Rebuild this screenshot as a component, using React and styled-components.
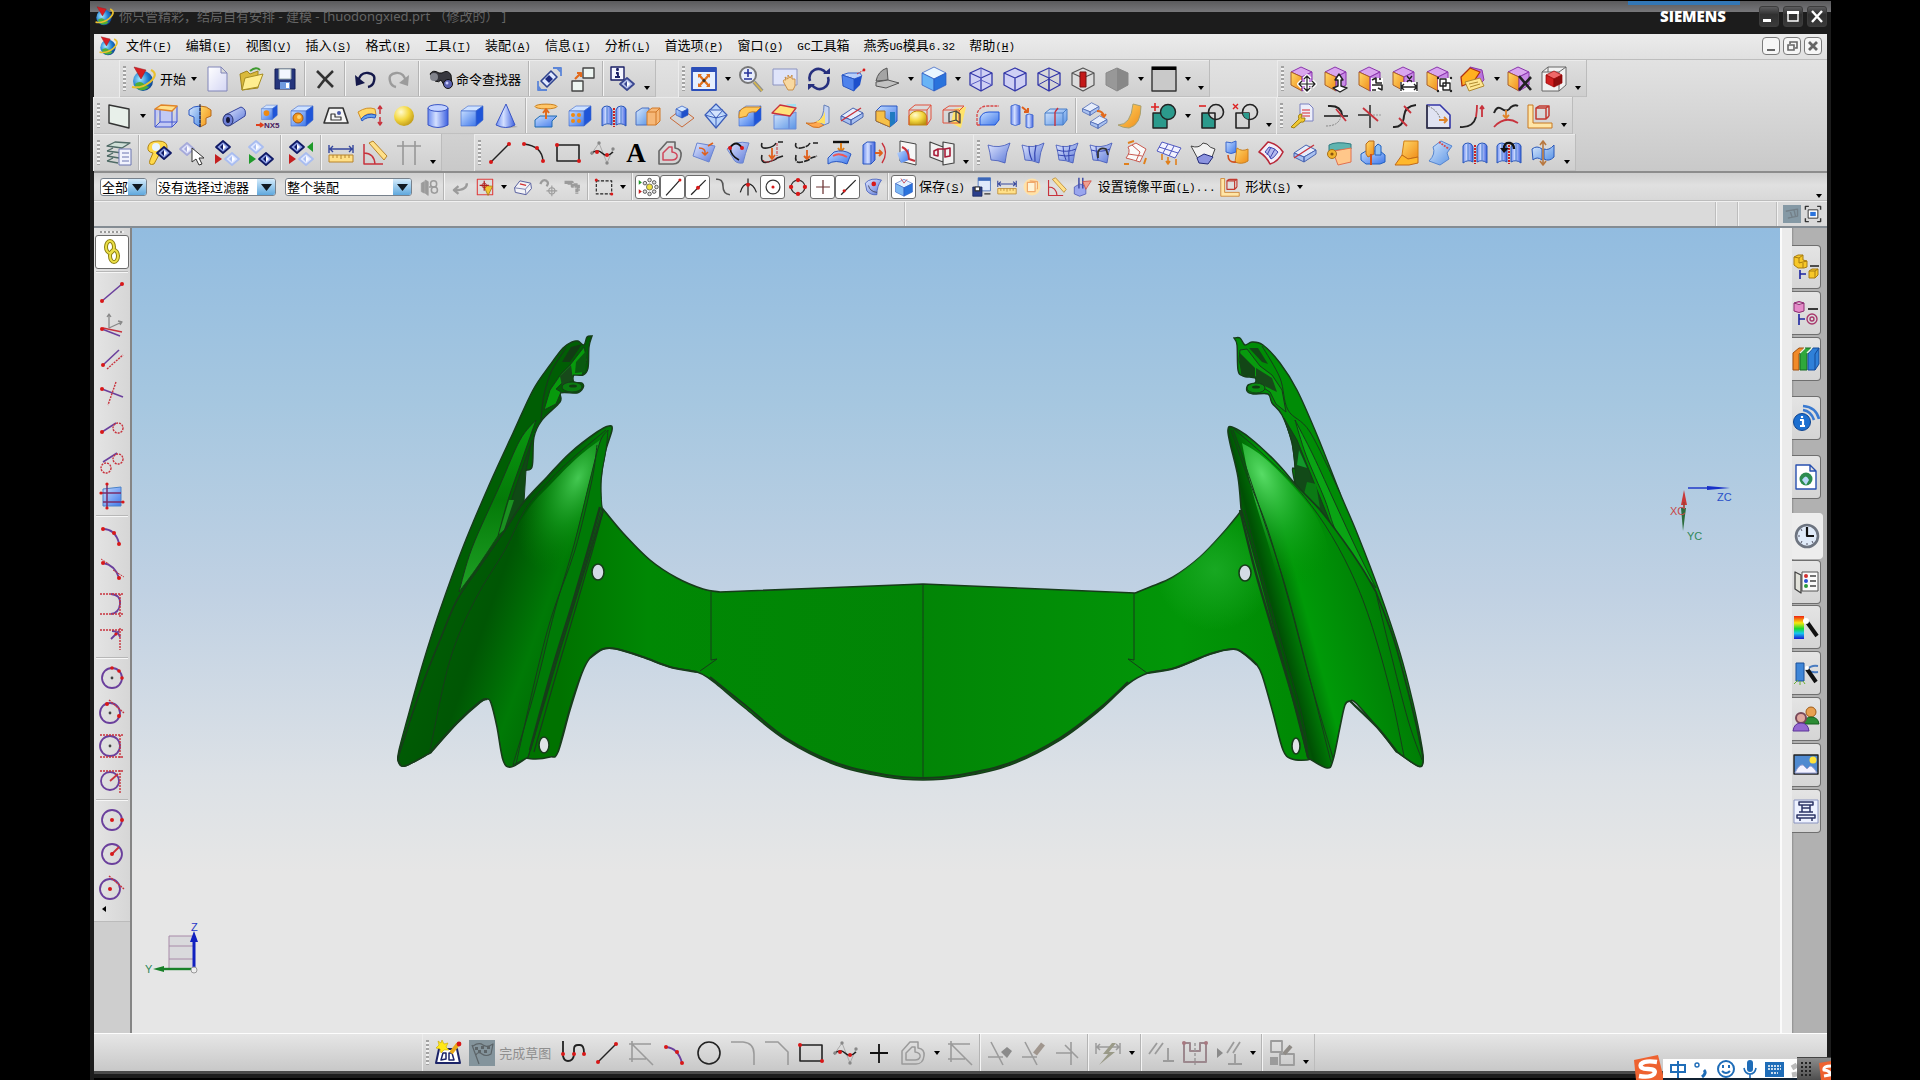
import React from "react";
import styled, { createGlobalStyle, css } from "styled-components";

const GlobalStyle = createGlobalStyle`
  * {
    box-sizing: border-box;
  }
  body {
    margin: 0;
    background: #000;
    color: #000;
    font-family: "Noto Sans CJK SC", sans-serif;
    font-size: 13px;
    line-height: 18px;
  }
  button,
  select {
    margin: 0;
    padding: 0;
    border: 0;
    background: none;
    color: inherit;
    font: inherit;
  }
`;

const Frame = styled.div`
  position: relative;
  display: flex;
  flex-direction: column;
  height: 100vh;
  margin: 0 89px 0 90px;
  padding: 0 4px 0 4px;
  background: #1c1c1c;
  overflow: hidden;
`;

const TitleBar = styled.header`
  display: flex;
  align-items: center;
  flex: none;
  height: 34px;
  margin: 0 -4px;
  padding: 0 4px 3px 4px;
  border-top: 1px solid #000;
  background: linear-gradient(#5a5a5c, #77777a 11px, #1c1c1c 11px);
`;

const TitleText = styled.h1`
  flex: 1;
  margin: 0 0 0 5px;
  color: #656565;
  font: 400 13px/18px "Noto Sans", "Noto Sans CJK SC", sans-serif;
  white-space: pre;
`;

const Brand = styled.div`
  align-self: stretch;
  width: 112px;
  margin-right: 15px;
  padding: 2px 0 0 32px;
  border-top: 4px solid #3377b5;
  color: #fff;
  font: 800 15px/18px "Open Sans", sans-serif;
`;

const WindowButton = styled.button`
  width: 20px;
  height: 21px;
  margin-left: 4px;
  border: 1px solid #3c3c3c;
  border-radius: 3px;
  background: linear-gradient(#5d5d5f, #303030 40%, #3a3a3a);
  svg {
    display: block;
  }
`;

const MenuBar = styled.nav`
  display: flex;
  align-items: center;
  flex: none;
  gap: 0;
  height: 26px;
  padding: 0 5px 2px 4px;
  border-bottom: 1px solid #bdbdbd;
  background: linear-gradient(#ececec, #e0e0e0);
`;

const MenuItem = styled.button`
  margin-right: 14px;
  white-space: nowrap;
`;

const MdiButton = styled.button`
  width: 18px;
  height: 18px;
  margin-left: 3px;
  border: 1px solid #7b7b7b;
  border-radius: 4px;
  background: #f6f6f6;
  svg {
    display: block;
  }
`;

const Spacer = styled.div`
  flex: ${(p) => (p.$width ? "none" : 1)};
  width: ${(p) => p.$width || 0}px;
`;

const Latin = styled.span`
  font-family: "Liberation Mono", monospace;
  font-size: 11px;
`;

const ToolArea = styled.div`
  flex: none;
  border-bottom: 2px solid #8d8d8d;
  background: linear-gradient(#e2e2e2, #c9c9c9);
`;

const ToolRow = styled.div`
  display: flex;
  height: 37px;
  padding-left: ${(p) => p.$indent || 0}px;
`;

const ToolGroup = styled.div`
  display: flex;
  align-items: center;
  margin-left: ${(p) => p.$gap || 0}px;
  border-top: 1px solid #ebebeb;
  border-bottom: 1px solid #c0c0c0;
  box-shadow: 1px 0 #bcbcbc, -1px 0 #ececec;
  background: linear-gradient(#dfdfdf, #cfcfcf);
`;

const Grip = styled.i`
  align-self: center;
  flex: none;
  width: 3px;
  height: 25px;
  margin: 0 2px 0 3px;
  background: repeating-linear-gradient(#a2a2a2 0 2px, #f1f1f1 2px 4px);
`;

const Separator = styled.i`
  align-self: stretch;
  flex: none;
  width: 2px;
  margin: 0 2px;
  border-left: 1px solid #b4b4b4;
  border-right: 1px solid #f4f4f4;
`;

const IconButton = styled.button`
  display: flex;
  align-items: center;
  justify-content: center;
  flex: none;
  width: ${(p) => (p.$small ? 25 : 34)}px;
  height: ${(p) => (p.$small ? 24 : 34)}px;
  ${(p) =>
    p.$pressed &&
    css`
      border: 1px solid #6c6c6c;
      border-radius: 3px;
      background: #fff;
    `}
`;

const TextButton = styled.button`
  display: flex;
  align-items: center;
  flex: none;
  gap: ${(p) => p.$gap || 2}px;
  padding: 0 ${(p) => (p.$end === undefined ? 5 : p.$end)}px 0 ${(p) => (p.$start === undefined ? 4 : p.$start)}px;
  color: ${(p) => (p.$off ? "#8f8f8f" : "#000")};
  white-space: nowrap;
`;

const DropArrow = styled.i`
  display: flex;
  justify-content: center;
  flex: none;
  width: 13px;
  &::after {
    content: "";
    border: 3px solid transparent;
    border-top: 4px solid #000;
    border-bottom: 0;
  }
`;

const Overflow = styled(DropArrow)`
  width: 15px;
  padding: 18px 2px 0 0;
`;

const SelectionBar = styled.div`
  display: flex;
  align-items: center;
  flex: none;
  height: 28px;
  padding: 0 0 0 6px;
  border-bottom: 1px solid #bcbcbc;
  background: linear-gradient(#cfcfcf, #e0e0e0 12px, #d8d8d8);
`;

const SelectBox = styled.label`
  display: flex;
  flex: none;
  width: ${(p) => p.$width}px;
  height: 18px;
  margin-right: 9px;
  border: 1px solid #77818c;
  border-radius: 3px;
  background: #fff;
  overflow: hidden;
  &:last-of-type {
    margin-right: 4px;
  }
  select {
    flex: 1;
    min-width: 0;
    padding-left: 1px;
    appearance: none;
    outline: 0;
    line-height: 16px;
  }
  svg {
    flex: none;
    background: linear-gradient(#d4ebfb, #5fa8dd);
  }
`;

const StatusBar = styled.div`
  display: flex;
  align-items: center;
  flex: none;
  height: 27px;
  border-top: 1px solid #f0f0f0;
  border-bottom: 2px solid #848c93;
  background: #dadada;
`;

const StatusCell = styled.div`
  align-self: stretch;
  flex: ${(p) => p.$flex || "none"};
  width: ${(p) => p.$width || 0}px;
  border-right: 1px solid #f2f2f2;
  box-shadow: inset -1px 0 #bdbdbd;
`;

const Body = styled.main`
  display: flex;
  flex: 1;
  min-height: 0;
`;

const SideBar = styled.aside`
  flex: none;
  width: 38px;
  border-right: 2px solid #858585;
  background: #cecece;
`;

const SideTools = styled.div`
  display: flex;
  flex-direction: column;
  align-items: center;
  height: 694px;
  border-bottom: 1px solid #bbb;
  background: linear-gradient(90deg, #e4e4e4, #d6d6d6);
  hr {
    width: 32px;
    height: 2px;
    margin: 2px 0;
    border: 0;
    border-top: 1px solid #b7b7b7;
    border-bottom: 1px solid #f6f6f6;
  }
`;

const SideGrip = styled.i`
  flex: none;
  width: 24px;
  height: 2px;
  margin: 3px 0 2px;
  background: repeating-linear-gradient(90deg, #999 0 2px, #eee 2px 4px);
`;

const Canvas = styled.section`
  flex: 1;
  min-width: 0;
  background: linear-gradient(#92bce0, #a6c7e0 22%, #c0d1e3 45%, #dce1e6 68%, #e6e6e6 80%);
  svg {
    display: block;
    width: 100%;
    height: 100%;
  }
`;

const Strip = styled.div`
  flex: none;
  width: 12px;
  border-left: 2px solid #fbfbfb;
  background: #ebebeb;
`;

const TabRail = styled.aside`
  flex: none;
  width: 35px;
  padding-top: 17px;
  background: linear-gradient(90deg, #8f8f8f, #b1b1b1 2px);
`;

const RailTab = styled.button`
  display: flex;
  align-items: center;
  justify-content: center;
  width: 29px;
  height: 44px;
  margin: 0 0 ${(p) => p.$after || 2}px 0;
  border: 1px solid #6f6f6f;
  border-left: 0;
  border-radius: 0 4px 4px 0;
  background: linear-gradient(#e4e4e4, #d5d5d5);
  ${(p) =>
    p.$active &&
    css`
      width: 31px;
      height: 46px;
      border-color: #eee;
      background: #ededed;
    `}
`;

const BottomBar = styled.footer`
  display: flex;
  flex: none;
  height: 38px;
  padding-left: 19%;
  border-top: 1px solid #fdfdfd;
  background: linear-gradient(#e6e6e6, #c8c8c8);
  ${ToolGroup} {
    border: 0;
    background: none;
  }
`;

const FrameFoot = styled.div`
  flex: none;
  height: 9px;
  border-top: 3px solid #4a4a4a;
  border-bottom: 2px solid #000;
  background: #1c1c1c;
`;

const InputMethod = styled.div`
  position: absolute;
  right: 0;
  bottom: 0;
  display: flex;
  align-items: flex-end;
  height: 25px;
`;

const ImeKeys = styled.div`
  display: flex;
  align-items: center;
  height: 21px;
  padding-left: 5px;
  border-bottom: 2px solid #123;
  background: #fff;
`;

const ImeTail = styled.div`
  width: 34px;
  height: 23px;
  border-top: 1px solid #444;
  background: linear-gradient(#8c8c8c, #4e4e4e);
`;

// ---- drawing helpers, every icon lives on a 26 x 26 grid ----

const P = ({ d, f = "none", s = "#222", w = 1, dash }) => (
  <path d={d} fill={f} stroke={s} strokeWidth={w} strokeDasharray={dash} strokeLinejoin="round" />
);

const Dots = ({ at, c = "#d81818", r = 2 }) =>
  at.map(([x, y]) => <circle key={`${x}-${y}`} cx={x} cy={y} r={r} fill={c} />);

const Box = ({ x = 3, y = 3, w = 20, top = "#d5e8ff", left = "url(#blue)", right = "#1d50cc", s = "#2a56c0" }) => {
  const h = w / 4;
  return (
    <g transform={`translate(${x} ${y})`}>
      <P d={`M0 ${h} L${w / 2} 0 L${w} ${h} L${w / 2} ${h * 2}Z`} f={top} s={s} w={0.7} />
      <P d={`M0 ${h} L${w / 2} ${h * 2} V${w} L0 ${w - h}Z`} f={left} s={s} w={0.7} />
      <P d={`M${w} ${h} L${w / 2} ${h * 2} V${w} L${w} ${w - h}Z`} f={right} s={s} w={0.7} />
    </g>
  );
};

const Block = ({ front = "url(#blue)", top = "#cfe2ff", side = "#1f55d8", s = "#3a66cc" }) => (
  <>
    <P d="M2 8 L9 3 H24 L17 8Z" f={top} s={s} w={0.6} />
    <P d="M17 8 L24 3 V17 L17 23Z" f={side} s={s} w={0.6} />
    <P d="M2 8 H17 V23 H2Z" f={front} s={s} w={0.6} />
  </>
);

const Wire = ({ fill = "#cfd0f4", extra }) => (
  <>
    <P d="M2 7 L13 2 L24 7 V19 L13 25 L2 19Z" f={fill} s="#3236a8" w={1.3} />
    <P d="M2 7 L13 12 L24 7 M13 12 V25" s="#3236a8" w={1.3} />
    {extra && <P d="M13 2 V14 M2 19 L13 14 L24 19" s="#5a5ec4" w={1} />}
  </>
);

const Asm = ({ children }) => (
  <>
    <P d="M1 6 L11 1 L22 6 L12 11Z" f="#d9a6ee" s="#8a34ad" />
    <P d="M1 6 L12 11 V25 L1 19Z" f="url(#orange)" s="#a8602a" />
    <P d="M22 6 L12 11 V25 L22 19Z" f="#c88ae6" s="#8a34ad" />
    {children}
  </>
);

const Diamond = ({ x, y, c = "#101a66", f = "#8fa2e8" }) => (
  <g transform={`translate(${x} ${y})`}>
    <P d="M0 -6 L7 0 L0 6 L-7 0Z" f={f} s={c} w={1.8} />
    <P d="M0 -3 V3 L3 0Z" f="#fff" s="none" />
    <P d="M0 -3 V3 L-3 0Z" f={c} s="none" />
  </g>
);

const Layers = () => (
  <>
    <P d="M2 13 L14 5 L24 10 L12 17Z" f="#e6edfb" s="#4763b0" />
    <P d="M2 13 V17 L12 22 V17Z M12 17 L24 10 V14 L12 22Z" f="#a9c1f0" s="#4763b0" />
  </>
);

const Book = ({ mid = "#c22" }) => (
  <>
    <P d="M1 23 V6 Q2 3 6 3 Q10 3 11 7 V22 Q6 19 1 23Z" f="url(#tube)" s="#2857b8" />
    <P d="M15 22 V7 Q16 3 20 3 Q24 3 25 6 V23 Q20 19 15 22Z" f="url(#tube)" s="#2857b8" />
    <P d="M6 4 V20 M20 4 V20" s="#3f74d0" />
    <P d="M13 5 V24" s={mid} w={2} dash="2 1" />
  </>
);

const Sheet = () => <P d="M2 5 Q13 9 24 3 Q20 12 19 23 Q12 20 5 20 Q4 12 2 5Z" f="url(#steel)" s="#4055b8" w={0.8} />;

const Circ = ({ cx = 13, cy = 13, r = 9, s = "#6a3f9c", w = 1.4, dash }) => (
  <circle cx={cx} cy={cy} r={r} fill="none" stroke={s} strokeWidth={w} strokeDasharray={dash} />
);

const Nx = () => (
  <>
    <circle cx="13" cy="15" r="10" fill="url(#globe)" />
    <P d="M5 18 Q10 14 14 18 T20 20 Q16 25 10 24 Q6 22 5 18Z" f="#4fae35" s="none" />
    <P d="M21 4 Q29 8 20 16 Q11 23 2 21" s="#e8c030" w={2.2} />
    <P d="M4 1 L16 4 L11 13Z" f="#d81e24" s="#98141a" w={0.5} />
  </>
);

const red = "#c8323c";
const ink = "#222";
const dim = "#9b9b9b";
const vio = "#6a3f9c";

const icons = {
  nx: <Nx />,
  newFile: <P d="M4 1 H17 L23 7 V25 H4Z M17 1 V7 H23" f="url(#paper)" s="#8085b8" />,
  open: (
    <>
      <P d="M2 8 L9 5 L12 8 L20 5 V22 L4 24Z" f="#d9b93c" s="#9f8420" />
      <P d="M4 24 L7 12 L25 8 L20 21Z" f="#ffee90" s="#a68d22" />
      <P d="M12 5 Q18 0 22 4" s="#3f9a30" w={2} />
    </>
  ),
  save: (
    <>
      <P d="M3 3 H23 V23 H3Z" f="#25357c" s="#141f55" />
      <P d="M7 3 H19 V13 H7Z" f="#f3f6ff" s="#9aa" />
      <P d="M8 16 H18 V23 H8Z" f="#6f9be0" s="none" />
      <P d="M14 17 H17 V22 H14Z" f="#fff" s="none" />
    </>
  ),
  del: <P d="M5 5 L21 21 M21 5 Q13 12 6 22" s="#333" w={2.6} />,
  undo: (
    <>
      <P d="M6 16 Q8 6 16 7 Q24 8 22 15 Q21 20 16 21" s="#14184a" w={2.4} />
      <P d="M3 9 L4 20 L13 17Z" f="#14184a" s="none" />
    </>
  ),
  redo: (
    <>
      <P d="M20 16 Q18 6 10 7 Q2 8 4 15 Q5 20 10 21" s={dim} w={2.4} />
      <P d="M23 9 L22 20 L13 17Z" f={dim} s="none" />
    </>
  ),
  binoc: (
    <>
      <P d="M2 8 Q5 3 11 7 L14 7 Q20 3 23 9 L24 19 Q20 23 16 19 L13 14 Q11 17 7 15Z" f="#38383f" s="#111" />
      <circle cx="6" cy="11" r="4" fill="#82848c" />
      <circle cx="20" cy="18" r="4.5" fill="#5b62b0" stroke="#111" />
      <circle cx="19" cy="17" r="1.5" fill="#c8cbff" />
    </>
  ),
  snapFit: (
    <>
      <P d="M5 15 L15 5 L21 11 L11 21Z" f="#dfe8ff" s="#2f438e" w={1.6} />
      <P d="M13 9 L17 13 L13 17 L9 13Z" f="#1c2a80" s="none" />
      <P d="M2 15 V24 H11 M5 24 L2 20 M17 2 H25 V10 M21 2 L25 6" s="#5c86d8" w={1.8} />
    </>
  ),
  arrange: (
    <>
      <P d="M13 2 H24 V12 H13Z M2 15 H13 V25 H2Z" f="#eef6f2" s="#444" w={1.4} />
      <P d="M5 13 L11 7 M7 7 H11 V11" s="#e26a1c" w={2.2} />
    </>
  ),
  info: (
    <>
      <P d="M1 1 H14 V14 H1Z" f="#f4f5ff" s="#1a1f66" w={1.4} />
      <P d="M7 3 h1 v1 h-1z M6 7 H8 V11 M5 11 H10" f="#1a1f66" s="#1a1f66" w={1.8} />
      <Diamond x={17} y={18} f="#b9c4ec" c="#3a4790" />
    </>
  ),
  fit: (
    <>
      <P d="M1 2 H25 V24 H1Z" f="#e6f0ff" s="#2b4eb8" w={1.8} />
      <P d="M1 2 H25 V6 H1Z" f="#2b4eb8" s="none" />
      <P d="M8 9 L18 20 M18 9 L8 20" s="#e0701c" w={2.4} />
      <P d="M7 8 h4 l-4 4z M19 8 v4 l-4 -4z M7 21 v-4 l4 4z M19 21 h-4 l4 -4z" f="#e0701c" s="none" />
      <circle cx="13" cy="14.5" r="1.6" fill="#3a3020" />
    </>
  ),
  zoom: (
    <>
      <P d="M16 16 L24 25" s="#8f8f8f" w={4} />
      <P d="M16 16 L24 25" s="#d8b84a" w={1.6} />
      <circle cx="10" cy="9" r="8" fill="#e7ecfa" stroke="#777" strokeWidth="2" />
      <P d="M10 3 V11 M6 7 H14 M6 13 H14" s="#26329a" w={1.6} />
    </>
  ),
  pan: (
    <>
      <P d="M1 3 H25 V19 H1Z" f="#dfe4fa" s="#8b93c0" />
      <P d="M12 17 Q10 13 14 14 L13 11 L16 13 V9 L18 12 L20 9 V13 L23 13 V20 L21 24 H16Z" f="#f8d8a0" s="#c98f48" />
    </>
  ),
  rotate: (
    <>
      <P d="M4 15 A9 9 0 0 1 20 7 M22 11 A9 9 0 0 1 6 19" s="#27307e" w={2.6} />
      <P d="M17 8 H24 V2Z M9 18 H2 V24Z" f="#27307e" s="none" />
    </>
  ),
  persp: (
    <>
      <P d="M2 9 L8 7 H20 L22 10 L14 13Z" f="#b9d0fb" s="#3a66cc" />
      <P d="M2 9 L14 13 V25 L3 20Z" f="#4f83ec" s="#2a56c0" />
      <P d="M22 10 L14 13 V25 L20 19Z" f="#1d50cc" s="none" />
      <P d="M17 8 L24 4" s={red} dash="2 1" />
      <Dots at={[[24, 4]]} r={1.4} />
    </>
  ),
  laptop: (
    <>
      <P d="M2 15 Q4 5 13 2 L14 14Z" f="#a4a4a4" s="#555" />
      <P d="M2 16 L14 14 L25 17 L12 22 L2 20Z" f="#c2c2c2" s="#555" />
    </>
  ),
  shaded: <Box x={1} y={1} w={24} top="#e9f6ff" left="#69b4f6" right="#2a73dc" />,
  wire1: <Wire extra />,
  wire2: <Wire />,
  wire3: (
    <>
      <Wire fill="none" />
      <P d="M13 2 V25 M2 19 L13 13 L24 19" s="#3236a8" />
    </>
  ),
  section: (
    <>
      <P d="M2 7 L13 2 L24 7 V19 L13 25 L2 19Z M2 7 L13 12 L24 7" f="#dcdcdc" s="#555" w={1.2} />
      <P d="M10 6 H16 V21 H10Z" f="#c41818" s="#701010" />
    </>
  ),
  grayHex: (
    <>
      <P d="M2 7 L13 2 L24 7 V19 L13 25 L2 19Z" f="#989898" s="#8a8a8a" />
      <P d="M13 2 V25 L24 19 V7Z" f="#888" s="none" />
    </>
  ),
  window: (
    <>
      <P d="M1 1 H25 V25 H1Z" f="#c9c9c9" s="#333" w={1.4} />
      <P d="M1 1 H25 V4 H1Z" f="#000" s="none" />
    </>
  ),
  asmMove: (
    <Asm>
      <P d="M17 10 V25 M9 18 H25 M14 13 L17 10 L20 13 M14 22 L17 25 L20 22 M12 15 L9 18 L12 21 M22 15 L25 18 L22 21" s="#fff" w={4} />
      <P d="M17 10 V25 M9 18 H25 M14 13 L17 10 L20 13 M14 22 L17 25 L20 22 M12 15 L9 18 L12 21 M22 15 L25 18 L22 21" w={1.2} />
    </Asm>
  ),
  asmConstr: (
    <Asm>
      <P d="M15 8 L19 14 H17 V20 L23 22 L16 26 L9 22 L14 20 V14 H11Z" f="#fff" w={1.4} />
    </Asm>
  ),
  asmSwap: (
    <Asm>
      <P d="M13 12 H25 V25 H13Z" f="#fff" s="none" />
      <P d="M14 14 L18 12 V17 H24 M14 19 H24 V24 L20 22 M14 24 H18 M22 12 V14" w={1.6} />
    </Asm>
  ),
  asmDim: (
    <Asm>
      <P d="M8 16 H26 V26 H8Z" f="#fff" s="none" />
      <P d="M9 16 V25 M25 16 V25 M9 21 H25 M12 18 L9 21 L12 24 M22 18 L25 21 L22 24 M15 10 L20 16 M20 10 L15 16" w={1.4} />
    </Asm>
  ),
  asmGroup: (
    <Asm>
      <P d="M12 12 H25 V25 H12Z" f="#fff" s="none" />
      <P d="M14 13 H20 V20 H14Z M17 17 H24 V24 H17Z" w={1.4} />
      <Dots at={[[12, 12], [25, 12], [12, 25], [25, 25]]} c="#222" r={1.2} />
    </Asm>
  ),
  asmTag: (
    <>
      <P d="M10 1 L22 4 L24 14 L18 20Z" f="#b874dc" s="#8a34ad" />
      <P d="M1 11 L10 2 L20 6 L14 15 L2 20Z" f="#ffb020" s="#b03010" w={1.3} />
      <P d="M5 16 L20 12 L24 20 L9 25Z" f="#ffe692" s="#b08a30" />
      <P d="M9 18 L18 16 M10 21 L20 18" s="#b08a30" />
    </>
  ),
  asmDel: (
    <Asm>
      <P d="M12 10 L24 24 M24 11 L12 24" w={2.6} />
    </Asm>
  ),
  redCube: (
    <>
      <P d="M1 6 H18 V25 H1Z M1 6 L7 1 H25 V19 L18 25 M18 6 L25 1 M7 1 V6" s="#666" f="#f1f1f1" />
      <Box x={5} y={5} w={16} top="#f06868" left="#d02020" right="#8e0e0e" s="#900" />
    </>
  ),

  plane: <P d="M3 2 L23 6 V25 L3 20Z" f="#e8f0ea" s="#333" w={1.4} />,
  extrude: (
    <>
      <P d="M2 6 V24 H19 V7 M24 3 V19 L19 24 M7 4 V19 L2 24 M7 19 H24" s="#4055d0" w={1} f="#c2c9f3" />
      <P d="M2 6 L8 2 L24 3 L19 8Z" f="#ffdf8a" s="#e08428" w={1.4} />
    </>
  ),
  revolve: (
    <>
      <P d="M13 3 Q20 3 24 7 V13 L19 15 V21 L13 24 V12Z" f="url(#orange)" s="#b56a1c" />
      <P d="M13 3 Q6 3 2 7 V12 L7 14 V20 L13 24Z" f="url(#sky)" s="#2a56c0" />
      <P d="M13 1 V25" s="#223" dash="3 1" />
    </>
  ),
  tube: (
    <>
      <P d="M4 12 L20 4 Q26 6 24 13 L10 22 Q2 20 4 12Z" f="url(#steel)" s="#33439c" />
      <ellipse cx="7" cy="17" rx="5" ry="6" fill="#6f80d6" stroke="#222c66" />
      <ellipse cx="7" cy="17" rx="2" ry="3" fill="#15183a" />
    </>
  ),
  nx5: (
    <>
      <g transform="translate(5 0) scale(0.72)">
        <Block />
        <circle cx="9" cy="14" r="4" fill="#f08a10" />
      </g>
      <P d="M1 22 H7 M5 20 L8 22 L5 24" s="#e0401c" w={1.8} />
      <text x="9" y="25" fontSize="8" fontWeight="700" fontFamily="Liberation Sans" fill="#4a2060">NX5</text>
    </>
  ),
  hole: (
    <>
      <Block />
      <circle cx="9" cy="15" r="5" fill="#f39a20" stroke="#a85a10" />
      <circle cx="10" cy="14" r="2" fill="#ffd470" />
    </>
  ),
  emboss: (
    <>
      <P d="M6 5 H20 L25 20 H1Z" f="#f6f6f6" s="#333" w={1.6} />
      <P d="M8 16 V11 H12 V14 H18 V17 H8Z" s="#333" w={1.2} />
      <circle cx="16" cy="10" r="2" fill="#4a5aa8" />
    </>
  ),
  thicken: (
    <>
      <P d="M1 9 Q10 3 18 6 L19 12 Q10 8 4 16Z" f="#ffd868" s="#d09028" />
      <P d="M4 16 Q10 9 19 12 L18 15 Q10 13 5 18Z" f="#64a0ec" s="#2a56c0" />
      <P d="M23 3 V11 M21 6 L23 3 L25 6 M23 14 V22 M21 19 L23 22 L25 19" s={red} w={1.5} />
    </>
  ),
  sphere: <circle cx="13" cy="13" r="10" fill="url(#ball)" />,
  cylinder: (
    <>
      <P d="M3 5 V22 Q13 27 23 22 V5" f="url(#tube)" s="#3a55c4" />
      <ellipse cx="13" cy="5" rx="10" ry="3.4" fill="#c3d3ff" stroke="#3a55c4" />
    </>
  ),
  block: <Block />,
  cone: (
    <>
      <P d="M16 21 L25 24 L14 25Z" f="#aaa" s="none" />
      <P d="M13 1 L3 22 Q13 27 22 22Z" f="url(#tube)" s="#3a55c4" />
    </>
  ),
  boss: (
    <>
      <P d="M2 17 L7 13 H24 L19 18 V24 H2Z" f="url(#blue)" s="#1f6ab0" />
      <ellipse cx="13" cy="3.5" rx="11" ry="2.4" fill="#ffc668" stroke="#c98020" />
      <P d="M13 16 V7 M10 10 L13 6 L16 10" s="#e26a1c" w={2} />
    </>
  ),
  pattern: (
    <>
      <Block />
      <Dots at={[[6, 12], [12, 12], [6, 18], [12, 18]]} c="#f08a10" r={2} />
    </>
  ),
  book: <Book />,
  mirror: (
    <>
      <P d="M1 9 L7 5 H14 V19 L12 22 H1Z" f="url(#sky)" s="#4a6fc0" />
      <P d="M12 9 L17 5 H25 V18 L21 22 H12Z" f="#f6b878" s="#d07828" />
      <P d="M12 9 H21 V22 M21 9 L25 5" s="#d07828" />
    </>
  ),
  offsetBox: (
    <>
      <P d="M13 6 L25 15 L13 24 L1 15Z" s="#c86a3a" f="none" />
      <Box x={7} y={3} w={12} />
    </>
  ),
  octa: (
    <>
      <P d="M13 1 L24 12 L13 25 L2 12Z" f="#b9d4fa" s="#3a5cb8" w={1.2} />
      <P d="M2 12 L13 15 L24 12 M13 15 V25 M6 7 L13 15 L20 7 Z" f="#d4e4fd" s="#3a5cb8" />
    </>
  ),
  blend: (
    <>
      <Block />
      <P d="M2 12 Q2 6 9 4 H24 L19 9 Q10 8 10 13 L2 15Z" f="#ffc858" s="#c98020" />
    </>
  ),
  chamfer: (
    <>
      <P d="M3 12 H18 V26 H3Z M18 12 L25 9 V26 H18Z" f="url(#sky)" s="#6a8cd8" />
      <P d="M15 1 H25 V8Z" f="#9fe2f2" s="none" />
      <P d="M1 10 L9 2 L25 5 L19 13Z" f="#ffe27a" s={red} w={1.3} />
    </>
  ),
  bend: (
    <>
      <P d="M1 20 Q10 21 13 18 L19 22 Q14 26 8 24Z" f="#ffa850" s="#d07020" />
      <P d="M13 18 Q19 14 19 2 L24 4 V20 L19 22Z" f="#c5d4f2" s="#6680b8" />
      <P d="M11 19 Q18 16 20 8 V21Z" f="#ffe060" s="none" />
    </>
  ),
  trim: (
    <>
      <Layers />
      <P d="M2 18 L22 5" s={red} w={1.4} />
    </>
  ),
  rib: (
    <>
      <P d="M3 8 L8 3 H24 V18 L17 24 L3 18Z" f="url(#blue)" s="#2a56c0" />
      <P d="M3 8 H12 V15 L17 18 V24 L3 18Z" f="#f6c048" s="#a8702a" />
      <P d="M17 9 H22 V20 L17 24Z" f="#1f7ac0" s="none" />
    </>
  ),
  dome: (
    <>
      <P d="M2 22 V13 Q6 7 13 8 Q20 9 20 16 V22Z" f="url(#ball)" s="#c08810" />
      <P d="M2 7 L8 2 H24 V16 L20 22 M2 7 H20 V22 M20 7 L24 2 M2 7 V22" s="#e0503c" />
    </>
  ),
  patch: (
    <>
      <P d="M13 6 L25 4 L20 25 L10 20Z" f="#ffe36a" s="none" />
      <P d="M2 7 L8 3 H23 L18 8 V20 H2Z M2 7 H18" s="#e0503c" />
      <P d="M8 10 L15 8 V17 L8 19Z M15 8 L19 11 V20 L15 17" s="#444" w={1.3} />
    </>
  ),
  roundBox: (
    <>
      <P d="M5 22 V15 Q7 9 14 9 H24 V17 L20 22Z" f="url(#blue)" s="#1f55d8" />
      <P d="M2 22 V11 Q4 3 13 3 H24 M2 22 H5" s="#d84848" w={1.3} dash="3 1" />
    </>
  ),
  moveFace: (
    <>
      <P d="M2 3 Q6 0 11 3 V21 Q6 24 2 21Z" f="url(#tube)" s="#4a6fd0" />
      <P d="M17 12 Q20 10 24 12 V24 Q20 26 17 24Z" f="url(#tube)" s="#4a6fd0" />
      <P d="M13 4 L19 9 M19 5 V9 H15" s="#e0601c" w={2} />
    </>
  ),
  split: (
    <>
      <P d="M2 10 L7 6 H24 V17 L20 22 H2Z" f="url(#sky)" s="#4a7fc8" />
      <P d="M2 10 H20 V22 M20 10 L24 6" s="#4a7fc8" />
      <P d="M12 9 V23 M12 9 L15 5" s={red} w={1.4} />
    </>
  ),
  stack: (
    <>
      <g transform="translate(-2 -4) scale(0.75)"><Layers /></g>
      <g transform="translate(6 9) scale(0.75)"><Layers /></g>
      <P d="M14 8 Q20 8 21 13 M18 11 L21 14 L23 11" s="#e26a1c" w={1.8} />
    </>
  ),
  curl: <P d="M1 22 Q14 22 16 1 L24 3 Q24 22 12 25 Q6 25 1 22Z" f="url(#orange)" s="#a8a070" />,
  unite: (
    <>
      <P d="M2 10 H16 V25 H2Z" f="#2b9a8c" w={1.4} />
      <circle cx="17" cy="9" r="7.5" fill="#2b9a8c" stroke="#222" strokeWidth="1.4" />
      <P d="M4 0 V8 M0 4 H8" s="#d22" w={1.6} />
    </>
  ),
  subtract: (
    <>
      <P d="M4 10 H17 V25 H4Z" f="#2b9a8c" w={1.6} />
      <circle cx="18" cy="9" r="7.5" fill="#d6d6d6" stroke="#222" strokeWidth="1.6" />
      <P d="M11 10 H17 V16" w={1.6} />
      <P d="M1 3 H8" s="#d22" w={1.6} />
    </>
  ),
  intersect: (
    <>
      <circle cx="18" cy="9" r="7.5" fill="none" stroke="#222" strokeWidth="1.6" />
      <P d="M4 10 H17 V25 H4Z" w={1.6} />
      <P d="M11 10 H17 V16 Q12 16 11 10Z" f="#2b9a8c" s="none" />
      <P d="M1 1 L6 6 M6 1 L1 6" s="#d22" w={1.4} />
    </>
  ),
  editParam: (
    <>
      <P d="M11 1 H20 L24 5 V18 H11Z" f="#eceefa" s="#7a80c0" />
      <P d="M13 7 H21 M13 10 H21 M13 13 H21" s="#e06a70" w={1.6} />
      <P d="M2 24 L10 16 Q8 11 13 11 L12 15 L16 15 Q16 20 12 19 L5 25Z" f="#f0c832" s="#a07f10" />
    </>
  ),
  curveTrim: (
    <>
      <P d="M1 13 H25" w={1.6} />
      <P d="M5 3 Q18 2 19 12" s={ink} w={2} />
      <P d="M3 23 Q16 23 18 13" s="#888" dash="2 1" />
      <P d="M13 6 L23 18" s={red} w={1.8} />
    </>
  ),
  corner: (
    <>
      <P d="M13 2 V25 M1 12 H13" s="#555" w={2} />
      <P d="M13 12 H25" s="#999" dash="2 1" />
      <P d="M6 5 L21 18" s={red} w={1.8} />
    </>
  ),
  divide: (
    <>
      <P d="M2 24 Q12 25 13 13 Q14 3 25 2" s={ink} w={2} />
      <P d="M13 3 L20 10 M8 15 L16 23" s={red} w={1.8} />
    </>
  ),
  filletPoly: (
    <>
      <P d="M2 2 H15 L25 12 V25 H2Z" f="#e0e3f2" s="#3436a8" w={1.6} />
      <P d="M2 2 V25 H25" s="#333" w={1.4} />
      <P d="M3 3 Q12 7 15 15" s="#777" dash="2 1" />
      <P d="M14 17 H22 M19 14 L22 17 L19 20" s="#e08428" w={1.8} />
    </>
  ),
  stretchArc: (
    <>
      <P d="M1 24 Q14 25 17 14" s={ink} w={1.8} />
      <P d="M17 14 Q18 8 18 2 M23 3 V14 M21 6 L23 3 L25 6" s={red} w={1.8} />
    </>
  ),
  smoothCurve: (
    <>
      <P d="M1 10 Q4 2 9 6 T18 4 Q22 1 25 3" s={ink} w={2} />
      <P d="M13 7 V14 M10 12 L13 15 L16 12" s="#e08428" w={1.8} />
      <P d="M1 24 Q12 12 25 20" s={red} w={1.8} />
    </>
  ),
  ruler: (
    <>
      <P d="M1 2 H6 V20 H25 V25 H1Z" f="#ffe6a8" s="#c87820" />
      <P d="M9 5 H19 V16 H9Z M12 3 H22 V13 M9 5 L12 3 M19 5 L22 3 M19 16 L22 13" s="#c23a30" w={1.5} />
    </>
  ),

  layerStack: (
    <>
      <P d="M1 6 L9 2 L24 3 L16 8Z M1 11 L7 8 M1 11 L16 13 M1 16 L7 13 M1 16 L13 18 M1 21 L7 18 M1 21 L12 23" f="#cfe0d8" s="#4f6b66" w={1.3} />
      <P d="M13 9 H25 V25 H13Z" f="#f1f3fd" s="#6a74b0" />
      <P d="M16 13 H23 M16 17 H23 M16 21 H23" s="#6a74b0" />
    </>
  ),
  palette: (
    <>
      <P d="M2 7 Q3 1 12 1 Q22 1 21 8 Q20 13 14 13 L8 24 Q2 26 4 20 L7 13 Q1 12 2 7Z" f="#ffd94a" s="#b08414" />
      <circle cx="10" cy="7" r="4" fill="#e8f4ff" />
      <Diamond x={18} y={13} />
    </>
  ),
  pickSel: (
    <>
      <Diamond x={7} y={9} f="#dde0fa" c="#a6aada" />
      <P d="M12 8 V22 L16 19 L19 25 L22 24 L19 18 H24Z" f="#fff" s="#333" />
    </>
  ),
  hideA: (
    <>
      <Diamond x={9} y={7} />
      <Diamond x={18} y={19} c="#a9bdf0" f="#dfe7ff" />
      <P d="M1 14 V24 L8 19Z" f="#c41f1f" s="none" />
    </>
  ),
  hideB: (
    <>
      <Diamond x={8} y={7} c="#a9bdf0" f="#dfe7ff" />
      <Diamond x={18} y={19} />
      <P d="M1 14 V24 L8 19Z" f="#1f9a2a" s="none" />
    </>
  ),
  hideC: (
    <>
      <Diamond x={9} y={7} />
      <Diamond x={18} y={19} c="#a9bdf0" f="#dfe7ff" />
      <P d="M1 14 V24 L8 19Z" f="#c41f1f" s="none" />
      <P d="M25 2 V12 L19 7Z" f="#1f9a2a" s="none" />
    </>
  ),
  measure: (
    <>
      <P d="M1 5 V13 M25 5 V13 M2 9 H24 M5 6 L2 9 L5 12 M21 6 L24 9 L21 12" s="#34469c" w={1.4} />
      <P d="M1 15 H25 V22 H1Z" f="#ffe088" s="#b8842a" />
      <P d="M5 15 V18 M9 15 V18 M13 15 V19 M17 15 V18 M21 15 V18" s="#b8842a" />
    </>
  ),
  angle: (
    <>
      <P d="M2 4 V24 H21 M2 13 Q12 13 13 24" s={red} w={1.5} />
      <P d="M7 3 L11 1 L25 16 L22 20Z" f="#ffe088" s="#b8842a" />
    </>
  ),
  hash: <P d="M1 6 H25 M7 1 V25 M19 1 V25" s="#989898" w={1.6} />,
  line: (
    <>
      <P d="M4 22 L22 4" w={1.5} />
      <Dots at={[[4, 22], [22, 4]]} />
    </>
  ),
  arc: (
    <>
      <P d="M3 4 Q21 6 22 21" w={1.5} />
      <Dots at={[[3, 4], [16, 8], [22, 21]]} />
    </>
  ),
  rect: (
    <>
      <P d="M2 5 H24 V21 H2Z" w={1.6} />
      <Dots at={[[2, 5], [24, 21]]} />
    </>
  ),
  spline: (
    <>
      <P d="M3 13 L10 3 L18 23 L24 9" s="#aaa" />
      <P d="M2 14 Q8 8 13 13 T24 12" w={1.6} />
      <Dots at={[[8, 12], [18, 15]]} />
      <Dots at={[[3, 13], [10, 3], [18, 23], [24, 9]]} c="#888" r={1.7} />
    </>
  ),
  text: (
    <text x="13" y="22" fontSize="27" fontWeight="700" fontFamily="Liberation Serif" textAnchor="middle">A</text>
  ),
  offsetCurve: (
    <>
      <P d="M2 24 V11 L10 2 H18 V8 Q25 9 24 16 Q23 24 16 24Z" s="#666" w={1.6} />
      <P d="M6 20 V13 L12 7 H15 V12 Q21 13 20 17 Q19 20 15 20Z" s="#d0485c" w={1.5} />
    </>
  ),
  project: (
    <>
      <P d="M2 16 L6 3 L24 6 L18 22Z" f="url(#steel)" s="#6a85d0" />
      <P d="M8 8 Q15 8 14 14 M11 12 L14 15 L17 12 M17 6 L22 3" s="#e0601c" w={1.6} />
    </>
  ),
  wrap: (
    <>
      <P d="M2 9 Q10 0 24 3 Q20 14 18 23 Q10 24 8 18Z" f="url(#steel)" s="#6a85d0" />
      <P d="M5 8 Q11 -1 17 8 M5 8 Q6 16 14 20" s="#111" w={1.8} />
      <Dots at={[[5, 8], [17, 8]]} />
    </>
  ),
  joinCurve: (
    <>
      <P d="M3 3 Q1 9 8 8 T17 3 M24 2 H19 M3 15 Q1 24 9 22 T18 18 L24 16" w={1.6} />
      <P d="M13 8 V19 M10 15 L13 19 L16 15" s="#e0601c" w={1.8} />
      <P d="M4 20 Q8 25 17 18 M18 3 V16" s={red} dash="3 1" />
    </>
  ),
  bridgeCurve: (
    <>
      <P d="M3 3 Q1 9 8 8 T17 3 M20 3 H25 M3 15 Q1 24 9 22 T18 18 L24 16" w={1.6} dash="6 1" />
      <P d="M14 10 V19 M11 16 L14 19 L17 16" s="#e0601c" w={1.8} />
    </>
  ),
  projDown: (
    <>
      <P d="M6 2 H22" s="#111" w={2.4} />
      <P d="M14 3 V11 M11 8 L14 12 L17 8" s="#e0801c" w={2} />
      <P d="M1 18 L7 12 Q16 9 24 14 L20 24 Q8 19 1 24Z" f="url(#blue)" s="#2a56c0" />
      <P d="M6 16 Q12 12 20 17" s="#e55" w={1.8} />
    </>
  ),
  cylProj: (
    <>
      <P d="M2 5 L6 2 H14 V20 L10 24 H2Z" f="url(#tube)" s="#2a56c0" />
      <P d="M10 5 V24" s="#2a56c0" />
      <P d="M14 13 H21 M18 10 L21 13 L18 16" s="#e0601c" w={1.8} />
      <P d="M21 3 Q28 12 21 23" s={red} w={1.4} />
    </>
  ),
  planeCurve: (
    <>
      <P d="M5 1 L21 4 V25 L5 21Z" f="#f7f7f7" s="#444" />
      <P d="M2 13 L14 9 V20 L6 23Z" f="url(#blue)" s="none" />
      <P d="M7 7 Q14 10 14 19 L20 21" s={red} w={2} />
    </>
  ),
  planeSect: (
    <>
      <P d="M1 2 L14 7 V22 L1 17Z M14 2 L25 4 V23 L14 25Z" f="#f1f1f1" s="#444" w={1.2} />
      <P d="M5 11 L9 9 V16 L5 15Z M16 9 L21 8 V16 L16 17Z M9 9 L16 9" s="#a81c38" w={1.6} />
    </>
  ),
  sheet1: <Sheet />,
  sheet2: (
    <>
      <Sheet />
      <P d="M9 6 Q9 14 12 20 M16 5 Q14 13 15 21" s="#3344b0" w={1.2} />
    </>
  ),
  sheet3: (
    <>
      <Sheet />
      <P d="M9 6 Q9 14 12 20 M16 5 Q14 13 15 21 M3 10 Q13 13 22 9 M4 15 Q12 17 20 15" s="#3344b0" />
    </>
  ),
  sheet4: (
    <>
      <Sheet />
      <P d="M8 6 Q8 14 10 20 M3 10 Q13 13 22 9" s="#3344b0" />
      <P d="M10 18 V12 Q12 7 18 9 L20 15" s="#333" w={1.8} />
    </>
  ),
  meshArrow: (
    <>
      <P d="M6 7 L14 3 L24 9 L18 22 Q12 20 4 18 Q9 12 6 7Z M10 5 L18 12 L14 21 M6 14 L20 16" f="#fafafa" s="#c85a50" />
      <P d="M12 1 L6 3 M22 24 L24 18 M2 24 H7" s="#e0801c" w={2} />
    </>
  ),
  meshDown: (
    <>
      <P d="M6 2 L25 8 L19 18 L1 11Z M12 4 L7 13 M18 6 L13 16 M3 7 L22 13" f="#f2f2ff" s="#5058c0" />
      <P d="M6 14 V20 M12 17 V24 M20 19 V25 M10 21 L12 24 L14 21" s="#e0801c" w={1.6} />
    </>
  ),
  meshFlag: (
    <>
      <P d="M1 6 Q9 9 13 3 L17 4 Q20 8 25 9 L22 17 Q14 15 8 19Z" f="#f1f1f1" s="#444" />
      <P d="M7 18 L14 14 L23 17 L18 24 L9 23Z" f="#8c94e0" s="#222a78" />
    </>
  ),
  twoTone: (
    <>
      <P d="M2 2 Q8 4 12 1 V12 Q7 15 2 12Z" f="url(#blue)" s="#3a66cc" />
      <P d="M13 8 Q18 12 24 9 V21 Q18 25 11 22Z" f="url(#orange)" s="#c98020" />
      <P d="M4 15 Q4 23 12 22" s="#d05020" w={1.6} />
    </>
  ),
  patchRed: (
    <>
      <P d="M10 2 Q20 4 25 12 Q20 22 12 24 Q8 16 1 12Z" f="#f3eef8" s="#b82838" w={1.6} />
      <P d="M11 7 Q17 8 20 12 Q16 18 13 19 Q11 14 7 12Z M13 7 L9 15 M17 9 L12 18" f="#b4b9ee" s="#4048b0" />
    </>
  ),
  roll: (
    <>
      <P d="M3 5 Q10 1 25 4 V9 L3 11Z" f="#5fb4b0" s="#2c7a80" />
      <P d="M8 11 L25 8 V22 L12 25 L9 17Z" f="#ffc78a" s="#e07050" />
      <circle cx="6" cy="14" r="4.5" fill="#f2b42c" stroke="#a8701a" />
      <circle cx="6" cy="14" r="1.6" fill="#8a5410" />
    </>
  ),
  assembly: (
    <>
      <P d="M1 14 L6 11 H20 L25 15 V22 L20 24 H6 L1 20Z" f="url(#blue)" s="#2060c0" />
      <P d="M6 4 L9 1 H14 V14 L8 17 L6 14Z" f="url(#orange)" s="#b86a1c" />
      <P d="M15 7 L18 4 L21 6 V15 H15Z" f="#8fc0f4" s="#2060c0" />
      <P d="M11 14 V25" s="#d05020" w={2} />
    </>
  ),
  boot: (
    <>
      <P d="M10 1 H24 V17 L14 19 L8 15Z" f="url(#orange)" s="#d08018" />
      <P d="M8 15 L14 19 L24 17 V23 L15 25 H1Z" f="#ffb82c" s="#c06818" />
    </>
  ),
  fold: (
    <>
      <P d="M5 7 L13 1 L24 6 L19 13 L21 19 L12 25 L1 21 Q8 14 5 7Z" f="url(#sky)" s="#5585d0" />
      <P d="M11 2 L21 9" s="#d84848" w={1.8} dash="2 1" />
    </>
  ),
  bookUndo: (
    <>
      <Book />
      <P d="M8 9 Q8 2 14 3 Q18 4 18 9" s="#111" w={2.4} />
      <P d="M4 8 L13 8 L8 13Z" f="#111" s="none" />
    </>
  ),
  flagPair: (
    <>
      <P d="M2 9 Q7 5 12 9 V20 Q7 16 3 20Z M14 9 Q19 11 24 5 V17 Q19 22 14 19Z" f="url(#sky)" s="#2857b8" />
      <P d="M13 1 V25 M10 5 L13 1 L16 5 M10 21 L13 25 L16 21" s="#b87840" w={1.6} />
    </>
  ),

  // selection bar
  clampOff: (
    <>
      <P d="M3 8 L7 6 V21 L3 19Z M8 4 L12 6 V24 L8 21Z" f={dim} s={dim} />
      <P d="M13 13 H16" s={dim} w={2} />
      <Circ cx={19} cy={9} r={4} s={dim} w={2} />
      <Circ cx={20} cy={17} r={4} s={dim} w={2} />
    </>
  ),
  backOff: <P d="M22 8 Q22 17 7 17 M11 12 L5 17 L11 22" s={dim} w={3} />,
  snapBox: (
    <>
      <P d="M3 3 H23 V23 H3Z" s="#e03c3c" w={1.4} />
      <P d="M11 11 L23 12 L17 24Z" f="#f2c430" s="#a07010" />
      <P d="M12 5 V18 M6 11 H18" s="#b02020" w={1.6} />
      <circle cx="12" cy="11" r="3" fill="none" stroke="#b02020" />
    </>
  ),
  eraser: (
    <>
      <P d="M2 14 L9 5 L23 8 L24 15 L17 23 L3 20Z" f="#f2f2f6" s="#5a62a0" w={1.3} />
      <P d="M2 14 L16 16 L23 8 M16 16 L17 23" s="#5a62a0" />
      <P d="M9 9 L17 11" s="#d03030" w={1.6} />
    </>
  ),
  undoDotOff: (
    <>
      <P d="M3 9 Q6 2 11 5 Q15 8 11 12" s={dim} w={3} />
      <Circ cx={18} cy={18} r={4} s={dim} />
      <P d="M18 11 V25 M11 18 H25" s={dim} w={1.4} />
    </>
  ),
  ribbonOff: <P d="M2 7 H12 V12 H18 V22 M8 5 V10 M14 10 H20 V18" s={dim} w={4} dash="5 1" />,
  dashRect: (
    <>
      <P d="M3 5 H23 V22 H3Z" w={1.5} dash="4 2" />
      <Dots at={[[3, 4], [23, 22]]} />
    </>
  ),
  snapAll: (
    <>
      <circle cx="15" cy="13" r="4" fill="#f0e040" stroke="#555" />
      {[[15, 4], [21, 7], [24, 13], [21, 19], [15, 22], [9, 19], [9, 8]].map(([x, y]) => (
        <circle key={`${x}${y}`} cx={x} cy={y} r="2.3" fill="#ddd" stroke="#333" />
      ))}
      <P d="M1 4 V10 L5 7Z" f="#1f9a2a" s="none" />
      <P d="M1 16 V22 L5 19Z" f="#c41f1f" s="none" />
    </>
  ),
  snapEnd: (
    <>
      <P d="M4 24 L21 5" w={1.6} />
      <Dots at={[[22, 4]]} />
    </>
  ),
  snapMid: (
    <>
      <P d="M4 23 L23 4" w={1.6} />
      <Dots at={[[13, 14]]} r={2.6} />
    </>
  ),
  snapCtrl: <P d="M4 3 Q13 2 13 12 Q13 22 22 23" s="#555" w={2} />,
  snapCross: (
    <>
      <P d="M13 2 V24 M3 20 Q6 9 13 9 Q20 9 24 20" w={1.6} />
      <Dots at={[[13, 10]]} r={2.6} />
    </>
  ),
  snapCenter: (
    <>
      <Circ s="#333" w={1.6} />
      <Dots at={[[13, 13]]} />
    </>
  ),
  snapQuad: (
    <>
      <Circ s="#333" w={1.6} r={9} />
      <Dots at={[[13, 4], [22, 13], [13, 22], [4, 13]]} r={2.8} />
    </>
  ),
  snapPlus: <P d="M13 4 V22 M4 13 H22" s="#6a3030" w={1.6} />,
  snapOn: (
    <>
      <P d="M4 23 L23 4" w={1.6} />
      <Dots at={[[8, 18]]} />
    </>
  ),
  snapFace: (
    <>
      <P d="M3 8 Q10 0 24 4 Q18 12 18 23 Q10 24 5 18Z" f="url(#steel)" s="#3a55b8" />
      <Dots at={[[14, 9]]} r={3} />
      <P d="M7 11 Q9 19 18 20" s="#334" />
    </>
  ),
  cubeOpen: (
    <>
      <Box x={2} y={3} w={22} top="#e4f2ff" left="#7cb8f4" right="#2a73dc" />
      <P d="M9 2 L13 8 L17 3" s={red} />
    </>
  ),
  saveView: (
    <>
      <P d="M8 1 H24 V18 H8Z" f="#dfe9fb" s="#3a66b8" />
      <P d="M8 1 H24 V5 H8Z" f="#3a66b8" s="none" />
      <P d="M1 13 H13 V25 H1Z" f="#2b3f8c" s="#16245c" />
      <P d="M4 13 H10 V18 H4Z M16 22 H24" f="#fff" s="#333" w={1.6} />
    </>
  ),
  glow: (
    <>
      <circle cx="13" cy="13" r="11" fill="#ffe2a8" />
      <P d="M7 7 H17 V19 H7Z M10 5 L20 6 V16" f="#fdf3d8" s="#f0a86a" w={1.6} />
    </>
  ),
  mirrorPlane: (
    <>
      <P d="M3 13 L10 9 L18 12 V22 L10 25 L3 22Z" f="#9aa6ee" s="#4a55b0" />
      <P d="M9 1 V15 M14 1 V15" s="#4450a8" w={2} />
      <P d="M14 6 L25 5 L18 16Z" f="#f0a090" s="#d04a40" />
    </>
  ),
  viewOff: (
    <>
      <P d="M0 0 H26 V26 H0Z" f="#8599a5" s="none" />
      <P d="M4 9 L21 6 V16 L7 19 M10 8 L13 17 M16 7 L18 16" s="#748089" w={2} />
    </>
  ),
  fullView: (
    <>
      <P d="M2 7 V2 H7 M19 2 H24 V7 M24 19 V24 H19 M7 24 H2 V19" s="#333" w={2} />
      <P d="M6 7 H20 V19 H6Z" f="#fff" s="#333" w={1.4} />
      <P d="M9 10 H17 V16 H9Z" f="#2a73dc" s="none" />
    </>
  ),

  // left curve tools
  chain: (
    <>
      <ellipse cx="11" cy="8" rx="4" ry="6" fill="none" stroke="#8c8010" strokeWidth="4" />
      <ellipse cx="15" cy="17" rx="4" ry="6" fill="none" stroke="#8c8010" strokeWidth="4" />
      <ellipse cx="11" cy="8" rx="4" ry="6" fill="none" stroke="#ece048" strokeWidth="2" />
      <ellipse cx="15" cy="17" rx="4" ry="6" fill="none" stroke="#ece048" strokeWidth="2" />
    </>
  ),
  cLine: (
    <>
      <P d="M3 22 L23 5" s={vio} w={1.6} />
      <Dots at={[[3, 22], [23, 5]]} />
    </>
  ),
  cAxis: (
    <>
      <P d="M10 15 V1 M8 4 L10 1 L12 4 M10 15 L23 9 M19 8 L23 9 L21 12" s="#888" w={1.3} />
      <P d="M3 16 L21 23" s={vio} w={1.5} />
      <P d="M4 15 L23 19" s={red} w={1.5} />
      <Dots at={[[3, 16]]} />
    </>
  ),
  cParallel: (
    <>
      <P d="M4 18 L20 3" s={vio} w={1.6} />
      <P d="M8 22 L24 8" s={red} w={1.4} dash="2 1" />
      <Dots at={[[4, 18]]} />
    </>
  ),
  cPerp: (
    <>
      <P d="M3 8 L24 16" s={vio} w={1.6} />
      <P d="M17 1 L9 24" s={red} w={1.4} dash="2 1" />
      <Dots at={[[3, 8]]} />
    </>
  ),
  cTangent: (
    <>
      <P d="M3 17 L17 8" s={vio} w={1.6} />
      <Circ cx={19} cy={13} r={5} s={red} dash="2 1" />
      <Dots at={[[3, 17]]} />
    </>
  ),
  cTwoTan: (
    <>
      <P d="M4 13 L18 4" s={vio} w={1.6} />
      <Circ cx={19} cy={10} r={5} s={red} dash="2 1" />
      <Circ cx={7} cy={19} r={5} s={red} dash="2 1" />
    </>
  ),
  cBound: (
    <>
      <P d="M4 6 L22 4 V23 H4Z" f="url(#blue)" s="#4a82c8" />
      <P d="M2 10 H22 M4 19 H24 M8 1 V25" s="#7a2c68" w={1.5} />
      <Dots at={[[2, 10], [8, 1], [24, 19], [8, 25]]} r={1.6} />
    </>
  ),
  cArc3: (
    <>
      <P d="M4 6 Q16 6 20 20" s={vio} w={1.8} />
      <Dots at={[[4, 6], [15, 10], [20, 21]]} />
    </>
  ),
  cArcTan: (
    <>
      <P d="M4 6 Q16 8 20 21" s={vio} w={1.8} />
      <P d="M2 2 L10 7 M14 13 L25 20" s={red} dash="2 1" />
      <Dots at={[[4, 6], [20, 21]]} />
    </>
  ),
  cArcSlot: (
    <>
      <P d="M12 3 Q22 4 21 13 Q20 22 12 23" s={vio} w={1.8} />
      <P d="M1 3 H24 M1 23 H24 M21 3 V26" s={red} dash="2 1" w={1.4} />
    </>
  ),
  cArcRad: (
    <>
      <P d="M12 14 L20 6 M13 6 Q19 6 21 12" s={vio} w={1.8} />
      <P d="M1 5 H24 M21 3 V25" s={red} dash="2 1" w={1.4} />
      <Dots at={[[17, 9]]} r={1.6} />
    </>
  ),
  cCirc3: (
    <>
      <Circ r={10} w={1.8} />
      <Dots at={[[13, 3], [20, 6], [23, 13]]} r={1.8} />
      <Dots at={[[13, 13]]} c="#444" r={1.4} />
    </>
  ),
  cCircTan: (
    <>
      <Circ cx={11} cy={14} r={10} w={1.8} />
      <P d="M10 1 L25 14" s={red} dash="2 1" w={1.4} />
      <Dots at={[[8, 5], [20, 17]]} />
      <Dots at={[[11, 14]]} c="#444" r={1.4} />
    </>
  ),
  cCircSlot: (
    <>
      <Circ cx={11} r={10} w={1.8} />
      <P d="M1 2 H25 M1 24 H25 M21 2 V26" s={red} dash="2 1" w={1.4} />
      <Dots at={[[11, 13]]} c="#444" r={1.4} />
    </>
  ),
  cCircRad: (
    <>
      <Circ cx={11} cy={14} r={9} w={1.8} />
      <P d="M1 4 H25 M21 3 V26" s={red} dash="2 1" w={1.4} />
      <P d="M11 14 L19 7" s={red} w={1.8} />
    </>
  ),
  cCircPt: (
    <>
      <Circ r={10} w={1.8} />
      <Dots at={[[13, 13], [23, 13]]} />
    </>
  ),
  cCircRad2: (
    <>
      <Circ r={10} w={1.8} />
      <P d="M13 13 L20 6" s={red} w={1.8} />
      <Dots at={[[13, 13]]} />
    </>
  ),
  cCircTan2: (
    <>
      <Circ cx={11} cy={14} r={10} w={1.8} />
      <P d="M10 1 L25 14" s={red} dash="2 1" w={1.4} />
      <Dots at={[[11, 14]]} />
    </>
  ),

  // bottom sketch bar
  sketch: (
    <>
      <P d="M4 9 H22 L25 23 H1Z" f="#fff" s="#1c2468" w={2} />
      <P d="M6 20 L8 13 H11 V19Z M14 20 V13 H17 L19 20Z" s="#1c2468" w={1.5} />
      <P d="M7 0 L9 4 L13 3 L11 7 L14 10 L9 10 L6 13 L5 9 L1 8 L4 5 L3 1 L6 3Z" f="#ffe818" s="#c8a800" w={0.6} />
      <P d="M16 13 L23 4" s="#e8a818" w={4} />
      <Dots at={[[24, 4]]} r={2.4} />
    </>
  ),
  finishOff: (
    <>
      <P d="M0 0 H26 V26 H0Z" f="#84949c" s="none" />
      <P d="M4 6 Q10 2 14 5 T24 4 L22 14 Q17 17 13 14 T7 15 M3 5 L10 24" s="#5c6468" w={1.2} />
      <P d="M6 7 h3 v3 h-3z M12 6 h3 v3 h-3z M18 6 h3 v3 h-3z M9 10 h3 v3 h-3z M15 10 h3 v3 h-3z" f="#5c6468" s="none" />
    </>
  ),
  profile: (
    <>
      <P d="M3 1 V16 Q4 21 8 21 Q13 21 14 15 V9 Q14 5 18 5 H20 Q24 5 24 13" w={1.8} />
      <Dots at={[[3, 14], [14, 14], [24, 14]]} />
    </>
  ),
  quickOff: <P d="M1 4 H23 M1 19 H18 M4 1 V22 M4 4 L25 25" s={dim} w={1.6} />,
  circle: <Circ r={11} s="#222" w={1.6} />,
  filletOff: <P d="M1 2 H13 Q24 3 24 14 V25" s={dim} w={1.6} />,
  chamferOff: <P d="M1 2 H14 L24 12 V25" s={dim} w={1.6} />,
  arcV: (
    <>
      <P d="M4 7 Q16 8 20 23" s={vio} w={1.8} />
      <Dots at={[[4, 7], [15, 12], [20, 23]]} />
    </>
  ),
  plus: <P d="M13 4 V23 M4 13 H22" s="#111" w={1.8} />,
  offsetOff: <P d="M2 24 V11 L10 2 H18 V8 Q25 9 24 16 Q23 24 16 24Z M6 20 V13 L12 7 H15 V12 Q21 13 20 17 Q19 20 15 20Z" s={dim} w={1.5} />,
  trimOff: (
    <>
      <P d="M1 17 H16 M4 2 L16 25" s={dim} w={1.6} />
      <P d="M14 12 L20 7 L25 11 L20 18Z" f="#8a8a8a" s="none" />
    </>
  ),
  extendOff: (
    <>
      <P d="M1 17 H16 M4 2 L16 25" s={dim} w={1.6} />
      <P d="M14 14 L22 4" s="#a0968e" w={5} />
    </>
  ),
  makeCornerOff: <P d="M1 13 H17 M16 2 V25 M10 5 L23 18" s={dim} w={1.6} />,
  dimOff: (
    <>
      <P d="M1 3 V14 M25 3 V14 M1 7 H25 M5 4 L2 7 L5 10 M21 4 L24 7 L21 10" s={dim} w={1.5} />
      <P d="M17 3 L8 14 H13 L4 25 L20 12 H14 L21 3Z" f="#9a9a88" s="none" />
    </>
  ),
  paraOff: <P d="M1 14 L9 3 M7 14 L15 3 M15 21 H26 M20 8 V21" s={dim} w={1.8} />,
  symOff: (
    <>
      <P d="M2 3 V22 H24 V3 M2 22 V3 H8 V11 H18 V3 H24" s="#9c888e" w={2} />
      <P d="M13 3 V25" s={dim} dash="3 2" w={1.5} />
      <Dots at={[[2, 3], [24, 3]]} c="#a87880" />
    </>
  ),
  autoOff: (
    <>
      <P d="M1 8 V18 L7 13Z" f="#8a8a8a" s="none" />
      <P d="M11 13 L18 2 M17 13 L24 2 M12 24 H26 M19 14 V24" s={dim} w={1.8} />
    </>
  ),
  groupOff: (
    <>
      <P d="M2 1 H13 V12 H2Z M11 14 H25 V25 H11Z" s={dim} w={1.8} />
      <P d="M1 17 H9 V25 H1Z" f={dim} s="none" />
      <P d="M15 14 L22 6" s="#8f8b86" w={4} />
    </>
  ),

  // resource rail
  asmNav: (
    <>
      <P d="M1 3 L5 1 H10 V6 L14 7 V13 L11 14 H5 L1 11Z" f="#f7c828" s="#a87c10" />
      <P d="M1 3 L6 4 L10 1 M6 4 V9 L14 7 M10 9 V14" s="#a87c10" />
      <P d="M16 17 L19 15 H25 V21 L22 24 H16Z M16 17 H22 V24 M22 17 L25 15" f="#f7c828" s="#a87c10" />
      <P d="M17 12 H26" s="#111" w={1.4} />
      <P d="M7 16 V25 M7 20 H13" s="#1c24a0" w={1.6} />
    </>
  ),
  partNav: (
    <>
      <P d="M1 3 Q6 0 11 3 V11 Q6 14 1 11Z M1 3 Q6 6 11 3" f="#e48ac8" s="#8c2c70" />
      <P d="M15 9 H25" s="#111" w={1.6} />
      <P d="M6 14 V25 M6 19 H12" s="#1c24a0" w={1.6} />
      <Circ cx={19} cy={19} r={5} s="#a8386c" />
      <Circ cx={19} cy={19} r={2} s="#a8386c" />
    </>
  ),
  books: (
    <>
      <P d="M0 7 L6 2 H11 L6 8 V24 H0Z" f="#f08a28" s="#a05010" />
      <P d="M7 8 L12 2 H18 L14 8 V24 H7Z" f="#2fa83c" s="#156a20" />
      <P d="M15 8 L20 2 H26 V18 L22 24 H15Z M22 24 V8 L26 2" f="#2f80d8" s="#144a98" />
      <P d="M7 7 L12 2 M14 7 L19 2" s="#e8f4e8" w={1.4} />
    </>
  ),
  web: (
    <>
      <circle cx="9" cy="17" r="8.5" fill="#1c6fd0" stroke="#0e4490" />
      <P d="M9 11 V13 M7 15 H10 V21 M7 21 H12" s="#fff" w={2.2} />
      <P d="M10 5 Q18 6 21 15 M10 1 Q23 2 26 14" s="#3a7ad0" w={2.6} />
    </>
  ),
  webPage: (
    <>
      <P d="M3 1 H17 L23 7 V25 H3Z M17 1 V7 H23" f="#fff" s="#2850b0" w={1.4} />
      <circle cx="13" cy="15" r="6.5" fill="#2c8c50" />
      <P d="M9 16 Q13 9 16 16 L13 21Z" f="#b8d8f8" s="none" />
    </>
  ),
  clock: (
    <>
      <circle cx="13" cy="13" r="11" fill="#dfeaf8" stroke="#6d7480" strokeWidth="2.6" />
      <P d="M13 4 V13 H20" s="#111" w={2.2} />
      <P d="M13 22 V20 M4 13 H6 M7 6 L8 8 M7 20 L8 18 M19 20 L18 18" s="#556" />
    </>
  ),
  roles: (
    <>
      <P d="M9 3 H25 V22 H9Z" f="#fafafa" s="#555" />
      <P d="M2 3 L8 6 V24 L2 20Z" f="#e2e2da" s="#444" w={1.3} />
      <Dots at={[[13, 7]]} c="#d03030" />
      <Dots at={[[13, 12]]} c="#2850d0" />
      <Dots at={[[13, 17]]} c="#2a9a3a" />
      <P d="M17 7 H23 M17 12 H23 M17 17 H23" s="#444" w={1.4} />
    </>
  ),
  rainbow: (
    <>
      <P d="M1 2 H11 V25 H1Z" f="url(#rainbow)" s="none" />
      <P d="M14 8 L24 22" s="#111" w={4} />
      <Dots at={[[13, 7]]} c="#fff" r={3} />
    </>
  ),
  process: (
    <>
      <P d="M3 3 H11 V21 H3Z" f="#3f86d8" s="#1c5098" />
      <P d="M25 6 Q18 5 15 9 M25 12 Q18 13 15 10" s="#4a7cc0" w={2} />
      <P d="M14 9 L23 22" s="#111" w={4} />
      <Dots at={[[14, 8]]} c="#fff" r={2} />
      <P d="M1 24 L5 20 M7 25 V21 M12 24 L10 21" s="#6ab030" />
    </>
  ),
  people: (
    <>
      <circle cx="18" cy="6" r="5" fill="#e8a050" stroke="#a05c18" />
      <P d="M11 18 Q12 11 18 11 Q25 11 26 18Z" f="#2c8c34" s="#14601c" />
      <circle cx="8" cy="12" r="5" fill="#e0a8a0" stroke="#784858" strokeWidth="2" />
      <P d="M0 25 Q1 17 8 17 Q15 17 16 25Z" f="#9468d0" s="#5c3498" />
    </>
  ),
  scene: (
    <>
      <P d="M1 3 H25 V22 H1Z" f="#4f8ad0" s="#222" w={1.4} />
      <P d="M2 21 Q6 12 10 13 L14 17 L17 14 Q20 14 24 21Z" f="#f2f2ff" s="#9aa0d0" />
      <circle cx="20" cy="8" r="3.5" fill="#ffe23a" />
    </>
  ),
  mold: (
    <>
      <P d="M1 2 H25 V25 H1Z" f="#eef2ff" s="#8a94c0" />
      <P d="M6 4 H20 V7 H6Z M9 7 V14 M17 7 V14 M6 14 H20 M4 17 H22 V20 H4Z M7 20 V23 M19 20 V23 M9 10 H17" s="#2c3466" w={1.5} />
    </>
  ),
};

const IconSvg = styled.svg`
  flex: none;
  overflow: visible;
`;

const Icon = ({ name, size = 26 }) => (
  <IconSvg width={size} height={size} viewBox="0 0 26 26" aria-hidden="true">
    {icons[name]}
  </IconSvg>
);

// Western characters use the narrow fixed pitch face, a bracketed key gets its underline
const Label = ({ children }) =>
  children.split(/([ -~]+)/).map((part, i) => {
    if (i % 2 === 0) return part;
    const key = part.match(/^(.*\()(\w)(\).*)$/);
    return (
      <Latin key={i}>
        {key ? (
          <>
            {key[1]}
            <u>{key[2]}</u>
            {key[3]}
          </>
        ) : (
          part
        )}
      </Latin>
    );
  });

// "|" separator, "v" drop-down arrow, ">" overflow arrow, ":" grip, "*name" pressed
const Tools = ({ items, small }) =>
  items.split(" ").map((item, i) => {
    if (item === ":") return <Grip key={i} />;
    if (item === "|") return <Separator key={i} />;
    if (item === "v") return <DropArrow key={i} />;
    if (item === ">") return <Overflow key={i} />;
    const pressed = item[0] === "*";
    const name = pressed ? item.slice(1) : item;
    return (
      <IconButton key={i} type="button" aria-label={name} $small={small} $pressed={pressed}>
        <Icon name={name} size={small ? 20 : 26} />
      </IconButton>
    );
  });

const FilterSelect = ({ label, width, value }) => (
  <SelectBox $width={width}>
    <select aria-label={label} defaultValue={value}>
      <option>{value}</option>
    </select>
    <svg width="18" height="16" viewBox="0 0 18 16">
      <path d="M4 5 H15 L9.5 12Z" fill="#101820" />
    </svg>
  </SelectBox>
);

const HiddenDefs = styled.svg`
  position: absolute;
  width: 0;
  height: 0;
`;

const Gradients = () => (
  <HiddenDefs aria-hidden="true">
    <defs>
      {[
        ["blue", "#c4dcff", "#3f78ea"],
        ["sky", "#d8e8fc", "#5a94e6"],
        ["orange", "#ffd868", "#f08c18"],
        ["steel", "#e2e8ff", "#5b78d8"],
        ["paper", "#ffffff", "#d4d6f4"],
      ].map(([id, from, to]) => (
        <linearGradient key={id} id={id} x1="0" y1="0" x2="1" y2="1">
          <stop offset="0" stopColor={from} />
          <stop offset="1" stopColor={to} />
        </linearGradient>
      ))}
      <linearGradient id="tube">
        <stop offset="0" stopColor="#6c8cf0" />
        <stop offset="0.4" stopColor="#d4e0ff" />
        <stop offset="1" stopColor="#3c60e0" />
      </linearGradient>
      <radialGradient id="ball" cx="0.35" cy="0.3" r="0.8">
        <stop offset="0" stopColor="#fffbd0" />
        <stop offset="0.5" stopColor="#f4d840" />
        <stop offset="1" stopColor="#b89010" />
      </radialGradient>
      <radialGradient id="globe" cx="0.35" cy="0.4" r="0.7">
        <stop offset="0" stopColor="#a8ecff" />
        <stop offset="0.6" stopColor="#1c7cd0" />
        <stop offset="1" stopColor="#0c3c88" />
      </radialGradient>
      <linearGradient id="rainbow" x1="0" y1="0" x2="0" y2="1">
        <stop offset="0" stopColor="#f02010" />
        <stop offset="0.3" stopColor="#f8e810" />
        <stop offset="0.55" stopColor="#18d830" />
        <stop offset="0.75" stopColor="#18c8f0" />
        <stop offset="1" stopColor="#1818d0" />
      </linearGradient>
    </defs>
  </HiddenDefs>
);

// Catmull-Rom through the listed points; repeat a point to keep a hard corner
const curve = (text, closed = true) => {
  const pts = text.split(" ").map((p) => p.split(",").map(Number));
  const n = pts.length;
  const at = (i) => (closed ? pts[(i + n) % n] : pts[Math.max(0, Math.min(n - 1, i))]);
  let d = `M${pts[0]}`;
  for (let i = 0; i < (closed ? n : n - 1); i++) {
    const [a, b, c, e] = [at(i - 1), at(i), at(i + 1), at(i + 2)];
    if (`${b}` === `${c}`) continue;
    d += `C${b[0] + (c[0] - a[0]) / 6},${b[1] + (c[1] - a[1]) / 6} ${c[0] - (e[0] - b[0]) / 6},${c[1] - (e[1] - b[1]) / 6} ${c}`;
  }
  return closed ? `${d}Z` : d;
};

const edge = "#173c1a";

const bodyShape = curve(
  "603,509 603,509 623,533 650,560 677,578 703,589 720,592 720,592 923,584 923,584 1135,593 1135,593 1150,587 1173,577 1200,557 1223,533 1241,511 1241,511 1280,600 1311,758 1311,758 1307,760 1292,759 1283,750 1273,713 1263,678 1257,665 1243,653 1233,649 1210,654 1175,668 1148,673 1128,684 1100,710 1060,740 1010,765 960,777 923,780 886,777 836,765 786,740 745,708 720,687 710,679 697,672 670,667 643,657 617,649 603,649 590,658 582,673 570,710 558,752 550,757 533,759 515,755 515,755"
);
const leftRear = curve(
  "592,336 592,336 587,337 584,345 578,341 572,342 563,348 550,365 533,390 513,433 490,483 463,547 440,610 423,663 407,720 399,750 398,761 405,766 430,753 430,753 500,620 523,503 523,503 523,473 532,467 534,437 542,420 560,402 561,393 577,393 583,388 582,383 574,382 574,375 583,375 588,368 589,347"
);
const leftFront = curve(
  "609,426 597,432 570,453 547,477 523,503 505,530 480,566 457,600 440,640 423,683 407,730 399,755 399,762 405,766 430,753 430,753 457,723 480,702 487,699 491,703 497,727 503,760 511,767 528,757 528,757 560,650 603,511 603,511 601,503 601,480 605,453 612,430"
);
const rightRear = curve(
  "1234,338 1234,338 1240,338 1245,345 1252,342 1263,345 1280,363 1297,390 1317,435 1340,493 1357,533 1380,593 1400,653 1413,703 1422,747 1423,762 1418,766 1397,752 1397,752 1330,620 1295,483 1295,467 1292,443 1282,415 1272,403 1268,394 1253,394 1247,391 1248,385 1255,383 1255,378 1243,376 1238,370 1237,345"
);
const rightFront = curve(
  "1232,427 1250,438 1277,463 1297,486 1320,510 1343,540 1362,568 1376,592 1376,592 1394,640 1411,703 1421,747 1423,762 1418,766 1397,752 1397,752 1377,727 1356,703 1350,701 1345,705 1340,727 1333,760 1327,768 1308,758 1308,758 1280,650 1241,508 1241,508 1238,477 1230,443 1228,430"
);

const Seam = ({ pts, w = 1 }) => <path d={curve(pts, false)} fill="none" stroke={edge} strokeWidth={w} />;

const Model = () => (
  <svg viewBox="132 228 1648 805" preserveAspectRatio="xMidYMid meet" role="img" aria-label="huodongxied.prt">
    <defs>
      <linearGradient id="bodyFill" x1="560" y1="0" x2="1290" y2="0" gradientUnits="userSpaceOnUse">
        <stop offset="0" stopColor="#007200" />
        <stop offset="0.12" stopColor="#008804" />
        <stop offset="0.5" stopColor="#028506" />
        <stop offset="0.85" stopColor="#029608" />
        <stop offset="1" stopColor="#008a04" />
      </linearGradient>
      <linearGradient id="leftFill" x1="430" y1="600" x2="570" y2="650" gradientUnits="userSpaceOnUse">
        <stop offset="0" stopColor="#005e04" />
        <stop offset="0.4" stopColor="#005604" />
        <stop offset="0.75" stopColor="#007a06" />
        <stop offset="1" stopColor="#006a04" />
      </linearGradient>
      <linearGradient id="rightFill" x1="1256" y1="640" x2="1406" y2="600" gradientUnits="userSpaceOnUse">
        <stop offset="0" stopColor="#009008" />
        <stop offset="0.16" stopColor="#005004" />
        <stop offset="0.36" stopColor="#009a08" />
        <stop offset="0.7" stopColor="#008606" />
        <stop offset="1" stopColor="#007404" />
      </linearGradient>
      <radialGradient id="glowL" cx="578" cy="478" r="100" gradientTransform="rotate(25 578 478) translate(289 0) scale(0.5 1)" gradientUnits="userSpaceOnUse">
        <stop offset="0" stopColor="#44c852" />
        <stop offset="0.5" stopColor="#149a1c" stopOpacity="0.7" />
        <stop offset="1" stopColor="#008000" stopOpacity="0" />
      </radialGradient>
      <radialGradient id="glowR" cx="1262" cy="474" r="120" gradientTransform="rotate(-25 1262 474) translate(631 0) scale(0.5 1)" gradientUnits="userSpaceOnUse">
        <stop offset="0" stopColor="#58dc66" />
        <stop offset="0.5" stopColor="#1cac28" stopOpacity="0.7" />
        <stop offset="1" stopColor="#009000" stopOpacity="0" />
      </radialGradient>
      <radialGradient id="glowArm" cx="1215" cy="570" r="60" gradientUnits="userSpaceOnUse">
        <stop offset="0" stopColor="#18a822" />
        <stop offset="1" stopColor="#18a822" stopOpacity="0" />
      </radialGradient>
      <linearGradient id="finL" x1="0" y1="420" x2="0" y2="580" gradientUnits="userSpaceOnUse">
        <stop offset="0" stopColor="#0a9a10" />
        <stop offset="0.5" stopColor="#047a08" />
        <stop offset="1" stopColor="#1c9c22" />
      </linearGradient>
    </defs>

    <path d={bodyShape} fill="url(#bodyFill)" stroke={edge} strokeWidth="1.6" />
    <path d={bodyShape} fill="url(#glowArm)" />
    <Seam pts="923,584 923,779" />
    <path d="M711 592 V660 L717 659 L700 671 M1134 593 V660 L1128 659 L1147 673" fill="none" stroke={edge} />
    <Seam pts="710,677 745,705 786,738 836,763 886,775 923,778 960,775 1010,763 1060,738 1100,708 1128,682" w={2} />
    <Seam pts="590,658 603,649 617,649 643,657 670,667 697,672" w={2} />
    <Seam pts="1148,673 1175,668 1210,654 1233,649 1243,653 1257,665" w={2} />

    <path d={leftRear} fill="#005e04" stroke={edge} strokeWidth="1.4" />
    <path d="M584 347 L570 365 L561 374 L550 390 L544 410 L556 404 L561 392 L556 389 L564 381 L572 381 L573 375 L582 375 L587 360Z" fill="#079a0c" stroke={edge} />
    <path d="M571 347 L582 344 L570 362 L562 362Z" fill="#123c14" />
    <path d="M576 362 L587 350 L585 372 L575 373Z" fill="#0a5a10" />
    <path d="M571 365 L573 380 L562 386 L560 376Z" fill="#174a1a" />
    <ellipse cx="572" cy="387" rx="10" ry="5" fill="#0a7c10" stroke={edge} />
    <ellipse cx="573" cy="386" rx="4" ry="1.6" fill="#123c14" />
    <path d={curve("536,420 536,420 522,460 508,500 498,536 498,536 478,566 459,592 459,592 472,548 500,485 520,440")} fill="url(#finL)" stroke={edge} />
    <path d="M532 440 L526 470 L524 502 L504 532 L513 495Z" fill="#0f4a14" stroke={edge} />
    <path d="M509 500 L514 500 L504 530 L499 534Z" fill="#1a9020" />
    <Seam pts="566,348 552,370 544,395 541,420" w={1.2} />

    <path d={leftFront} fill="url(#leftFill)" stroke={edge} strokeWidth="1.6" />
    <path d={curve("600,440 600,440 577,458 550,485 528,510 500,560 505,600 545,640 552,625 570,560 585,500")} fill="url(#glowL)" />
    <path d={curve("608,430 608,430 600,442 590,480 574,545 555,610 535,690 513,765 513,765 528,757 528,757 553,672 575,600 602,508 602,508 601,480 606,450")} fill="#007a06" stroke={edge} />
    <Seam pts="600,507 588,550 572,605 552,670 530,750" w={2.4} />
    <Seam pts="603,512 592,552 576,607 558,668 534,752" w={1.2} />
    <Seam pts="606,430 575,456 550,480 525,510 505,550 475,600 450,660 430,750" />
    <Seam pts="597,445 592,480 575,550 552,615 535,680 516,764" />
    <Seam pts="582,672 572,700 560,744" />
    <Seam pts="430,753 457,723 480,702 487,699" w={2.4} />

    <path d={rightRear} fill="#008c06" stroke={edge} strokeWidth="1.4" />
    <path d="M1240 350 L1247 349 L1260 366 L1272 375 L1282 390 L1286 412 L1276 404 L1270 392 L1256 383 L1256 377 L1243 375 L1239 360Z" fill="#089a0e" stroke={edge} />
    <path d="M1239 352 L1255 368 L1255 378 L1241 374Z M1249 348 L1262 362 L1268 364 L1258 348Z" fill="#124616" />
    <path d="M1256 368 L1272 378 L1277 392 L1256 382Z" fill="#174a1a" />
    <ellipse cx="1256" cy="388" rx="9" ry="5" fill="#0a8c10" stroke={edge} />
    <ellipse cx="1256" cy="387" rx="4" ry="1.6" fill="#123c14" />
    <path d={curve("1295,420 1295,420 1313,455 1336,505 1356,548 1376,588 1376,588 1358,566 1336,531 1325,500 1306,455")} fill="#0aa414" stroke={edge} />
    <path d="M1284 418 L1297 440 L1313 480 L1330 522 L1315 507 L1295 484 L1295 465 L1292 442Z" fill="#124a18" stroke={edge} />
    <path d="M1299 450 L1307 468 L1297 465Z" fill="#12982a" />
    <path d="M1307 482 L1316 484 L1320 508 L1304 494Z" fill="#0b7a14" />
    <Seam pts="1262,346 1280,378 1288,410 1310,432 1340,493" />

    <path d={rightFront} fill="url(#rightFill)" stroke={edge} strokeWidth="1.6" />
    <path d={curve("1242,443 1242,443 1262,456 1290,483 1318,520 1330,570 1310,640 1290,620 1270,550 1252,490")} fill="url(#glowR)" />
    <Seam pts="1233,430 1243,458 1262,515 1285,585 1305,660 1331,762" />
    <Seam pts="1231,430 1248,478 1268,530 1290,605 1310,680 1333,758" />
    <Seam pts="1240,510 1255,570 1275,638 1298,715 1308,757" w={2.4} />
    <Seam pts="1245,510 1262,575 1282,645 1301,712 1308,750" />
    <Seam pts="1234,429 1265,456 1297,488 1325,525 1350,570 1370,620 1390,690 1404,756" />
    <Seam pts="1376,593 1390,650 1408,720 1422,760" />
    <Seam pts="1350,701 1377,727 1397,752" w={2.4} />

    <g stroke={edge} strokeWidth="1.6">
      <ellipse cx="598" cy="572" rx="6" ry="8" fill="#d3dbe5" />
      <ellipse cx="544" cy="745" rx="5" ry="8" fill="#dfe2e6" />
      <ellipse cx="1245" cy="573" rx="6" ry="8" fill="#d3dbe5" />
      <ellipse cx="1296" cy="746" rx="4" ry="8" fill="#dfe2e6" />
    </g>

    <g fontFamily="Liberation Sans" fontSize="11">
      <path d="M1688 488 H1708" stroke="#1830c8" strokeWidth="1.4" />
      <path d="M1707 486 L1730 488 L1707 490Z" fill="#1830c8" />
      <path d="M1684 490 L1687 505 H1681Z" fill="#c83838" />
      <path d="M1684 502 V514" stroke="#a04030" strokeWidth="1.6" />
      <path d="M1681 508 L1683 531 L1686 508Z" fill="#2c6c3c" />
      <text x="1717" y="501" fill="#2a50c8">ZC</text>
      <text x="1670" y="515" fill="#c84848">XC</text>
      <text x="1687" y="540" fill="#308858">YC</text>

      <path d="M169 936 H194 V969 H169Z M169 946 H194 M169 959 H194" fill="#d9d9dc" stroke="#a88aa8" />
      <path d="M194 969 V936" stroke="#1020c0" strokeWidth="3" />
      <path d="M194 931 L198 942 H190Z" fill="#1020c0" />
      <path d="M194 969 H162" stroke="#188028" strokeWidth="2.4" />
      <path d="M153 969 L164 966 V972Z" fill="#188028" />
      <circle cx="194" cy="970" r="3" fill="#eee" stroke="#999" />
      <text x="191" y="931" fill="#2838c8">Z</text>
      <text x="145" y="973" fill="#308858">Y</text>
    </g>
  </svg>
);

const SogouMark = () => (
  <IconSvg width="30" height="25" viewBox="0 0 30 25">
    <path d="M1 5 L25 0 L30 20 V25 H3Z" fill="#ee6230" />
    <path d="M24 7 Q12 5 8 9 Q6 14 15 14 Q24 14 21 19 Q17 23 6 21" fill="none" stroke="#fff" strokeWidth="4.4" />
  </IconSvg>
);

const menus = [
  "文件(F)", "编辑(E)", "视图(V)", "插入(S)", "格式(R)", "工具(T)", "装配(A)", "信息(I)", "分析(L)",
  "首选项(P)", "窗口(O)", "GC工具箱", "燕秀UG模具6.32", "帮助(H)",
];

const sideTools = [
  ["cLine", "cAxis", "cParallel", "cPerp", "cTangent", "cTwoTan", "cBound"],
  ["cArc3", "cArcTan", "cArcSlot", "cArcRad"],
  ["cCirc3", "cCircTan", "cCircSlot", "cCircRad"],
  ["cCircPt", "cCircRad2", "cCircTan2"],
];

const railTabs = [
  ["asmNav"], ["partNav"], ["books", 15], ["web", 15], ["webPage", 14], ["clock", 1],
  ["roles", 1], ["rainbow"], ["process"], ["people"], ["scene"], ["mold"],
];

const App = () => (
  <>
    <GlobalStyle />
    <Gradients />
    <Frame>
      <TitleBar>
        <Icon name="nx" size={20} />
        <TitleText>你只管精彩，结局自有安排 - 建模 - [huodongxied.prt （修改的） ]</TitleText>
        <Brand>SIEMENS</Brand>
        <WindowButton type="button" aria-label="最小化">
          <svg width="18" height="19"><path d="M3 12 H11 V15 H3Z" fill="#fff" /></svg>
        </WindowButton>
        <WindowButton type="button" aria-label="最大化">
          <svg width="18" height="19"><path d="M4 5 H14 V14 H4Z" fill="none" stroke="#fff" strokeWidth="1.4" /><path d="M3 4 H15 V7 H3Z" fill="#fff" /></svg>
        </WindowButton>
        <WindowButton type="button" aria-label="关闭">
          <svg width="18" height="19"><path d="M4 4 L14 15 M14 4 L4 15" stroke="#fff" strokeWidth="2.4" /></svg>
        </WindowButton>
      </TitleBar>

      <MenuBar>
        <Icon name="nx" size={20} />
        <Spacer $width={8} />
        {menus.map((m) => (
          <MenuItem key={m} type="button"><Label>{m}</Label></MenuItem>
        ))}
        <Spacer />
        <MdiButton type="button" aria-label="最小化文档">
          <svg width="16" height="16"><path d="M4 11 H12 V13 H4Z" fill="#666" /></svg>
        </MdiButton>
        <MdiButton type="button" aria-label="还原文档">
          <svg width="16" height="16"><path d="M6 6 V4 H13 V10 H11 M4 7 H10 V12 H4Z" fill="none" stroke="#666" strokeWidth="1.6" /></svg>
        </MdiButton>
        <MdiButton type="button" aria-label="关闭文档">
          <svg width="16" height="16"><path d="M4 4 L12 12 M12 4 L4 12" stroke="#666" strokeWidth="2.8" /></svg>
        </MdiButton>
      </MenuBar>

      <ToolArea>
        <ToolRow $indent={26}>
          <ToolGroup>
            <Grip />
            <TextButton type="button" $gap={4} $start={2} $end={1}>
              <Icon name="nx" />
              开始
            </TextButton>
            <Tools items="v newFile open save | del | undo redo |" />
            <TextButton type="button" $start={6}>
              <Icon name="binoc" />
              <span>命令查找器</span>
            </TextButton>
            <Tools items="| snapFit arrange | info >" />
          </ToolGroup>
          <ToolGroup $gap={24}>
            <Tools items=": fit v zoom pan rotate persp laptop v shaded v wire1 wire2 wire3 section grayHex v window v >" />
          </ToolGroup>
          <ToolGroup $gap={69}>
            <Tools items=": asmMove asmConstr asmSwap asmDim asmGroup asmTag v asmDel redCube >" />
          </ToolGroup>
        </ToolRow>
        <ToolRow>
          <ToolGroup>
            <Tools items=": plane v extrude revolve tube nx5 hole emboss thicken sphere cylinder block cone | boss pattern book mirror offsetBox octa blend chamfer bend trim rib dome patch roundBox moveFace split | stack curl unite v subtract intersect >" />
          </ToolGroup>
          <ToolGroup>
            <Tools items=": editParam curveTrim corner divide filletPoly stretchArc smoothCurve ruler >" />
          </ToolGroup>
        </ToolRow>
        <ToolRow>
          <ToolGroup>
            <Tools items=": layerStack | palette pickSel hideA hideB | hideC | measure angle hash >" />
          </ToolGroup>
          <ToolGroup $gap={34}>
            <Tools items=": line arc rect spline text offsetCurve project wrap joinCurve bridgeCurve projDown cylProj planeCurve planeSect >" />
          </ToolGroup>
          <ToolGroup>
            <Tools items=": sheet1 sheet2 sheet3 sheet4 meshArrow meshDown meshFlag twoTone patchRed trim roll assembly boot fold book bookUndo flagPair >" />
          </ToolGroup>
        </ToolRow>
      </ToolArea>

      <SelectionBar>
        <FilterSelect label="类型" width={47} value="全部" />
        <FilterSelect label="过滤器" width={120} value="没有选择过滤器" />
        <FilterSelect label="范围" width={127} value="整个装配" />
        <Tools
          small
          items="clampOff | backOff snapBox v eraser undoDotOff ribbonOff | dashRect v | *snapAll *snapEnd *snapMid snapCtrl snapCross *snapCenter snapQuad *snapPlus *snapOn snapFace | *cubeOpen"
        />
        <TextButton type="button" $start={3}>
          <span><Label>保存(S)</Label></span>
        </TextButton>
        <Tools small items="saveView measure glow angle mirrorPlane" />
        <TextButton type="button" $start={3} $end={2}>
          <span><Label>设置镜像平面(L)...</Label></span>
        </TextButton>
        <Tools small items="ruler" />
        <TextButton type="button" $start={3} $end={0}>
          <span><Label>形状(S)</Label></span>
          <DropArrow />
        </TextButton>
        <Spacer />
        <Overflow />
      </SelectionBar>

      <StatusBar>
        <StatusCell $flex="812 1 0" />
        <StatusCell $flex="811 1 0" />
        <StatusCell $width={22} />
        <StatusCell $width={39} />
        <Spacer $width={5} />
        <Icon name="viewOff" size={18} />
        <Spacer $width={3} />
        <Icon name="fullView" size={18} />
        <Spacer $width={5} />
      </StatusBar>

      <Body>
        <SideBar>
          <SideTools>
            <SideGrip />
            <IconButton type="button" aria-label="chain" $pressed>
              <Icon name="chain" />
            </IconButton>
            {sideTools.map((group) => (
              <React.Fragment key={group[0]}>
                <hr />
                <Tools items={group.join(" ")} />
              </React.Fragment>
            ))}
            <svg width="24" height="10"><path d="M2 4 L6 1 V7Z" /></svg>
          </SideTools>
        </SideBar>
        <Canvas>
          <Model />
        </Canvas>
        <Strip />
        <TabRail>
          {railTabs.map(([name, after]) => (
            <RailTab key={name} type="button" aria-label={name} $after={after} $active={name === "clock"}>
              <Icon name={name} />
            </RailTab>
          ))}
        </TabRail>
      </Body>

      <BottomBar>
        <ToolGroup>
          <Tools items=": sketch finishOff" />
          <TextButton type="button" $off $start={0} disabled>完成草图</TextButton>
          <Tools items="profile line quickOff arcV circle filletOff chamferOff rect spline plus offsetOff v quickOff | trimOff extendOff makeCornerOff | dimOff v | paraOff symOff autoOff v | groupOff >" />
        </ToolGroup>
      </BottomBar>
      <FrameFoot />

      <InputMethod>
        <SogouMark />
        <ImeKeys>
          <svg width="129" height="19" viewBox="0 0 129 19" fill="none" stroke="#1f6db8" strokeWidth="2">
            <path d="M3 6 H17 V13 H3Z M10 2 V19" />
            <circle cx="29" cy="6" r="2" strokeWidth="1.4" />
            <path d="M36 11 Q39 14 34 18" strokeWidth="3" />
            <circle cx="58" cy="10" r="8" />
            <path d="M55 6 V9 M61 6 V9 M54 12 Q58 16 62 12" />
            <path d="M82 4 V10" strokeWidth="6" strokeLinecap="round" />
            <path d="M76 9 Q77 15 82 15 Q87 15 88 9 M82 15 V19" strokeWidth="1.6" />
            <path d="M98 4 H115 V17 H98Z" fill="#1f6db8" />
            <path d="M100 7 H113 M100 10 H113 M103 14 H110" stroke="#fff" strokeWidth="1.6" strokeDasharray="2 1" />
            <path d="M124 9 L129 6 M124 16 L129 15" stroke="#bbb" strokeWidth="5" />
          </svg>
        </ImeKeys>
        <ImeTail>
          <svg width="34" height="22">
            <path d="M4 5 H14 M4 9 H14 M4 13 H14 M4 17 H14" stroke="#222" strokeWidth="2" strokeDasharray="2 2" />
            <path d="M22 5 L34 3 V22 H24Z" fill="#ee6230" />
            <path d="M34 8 Q26 8 27 12 Q34 13 33 17 L27 18" fill="none" stroke="#fff" strokeWidth="3" />
          </svg>
        </ImeTail>
      </InputMethod>
    </Frame>
  </>
);

export default App;
